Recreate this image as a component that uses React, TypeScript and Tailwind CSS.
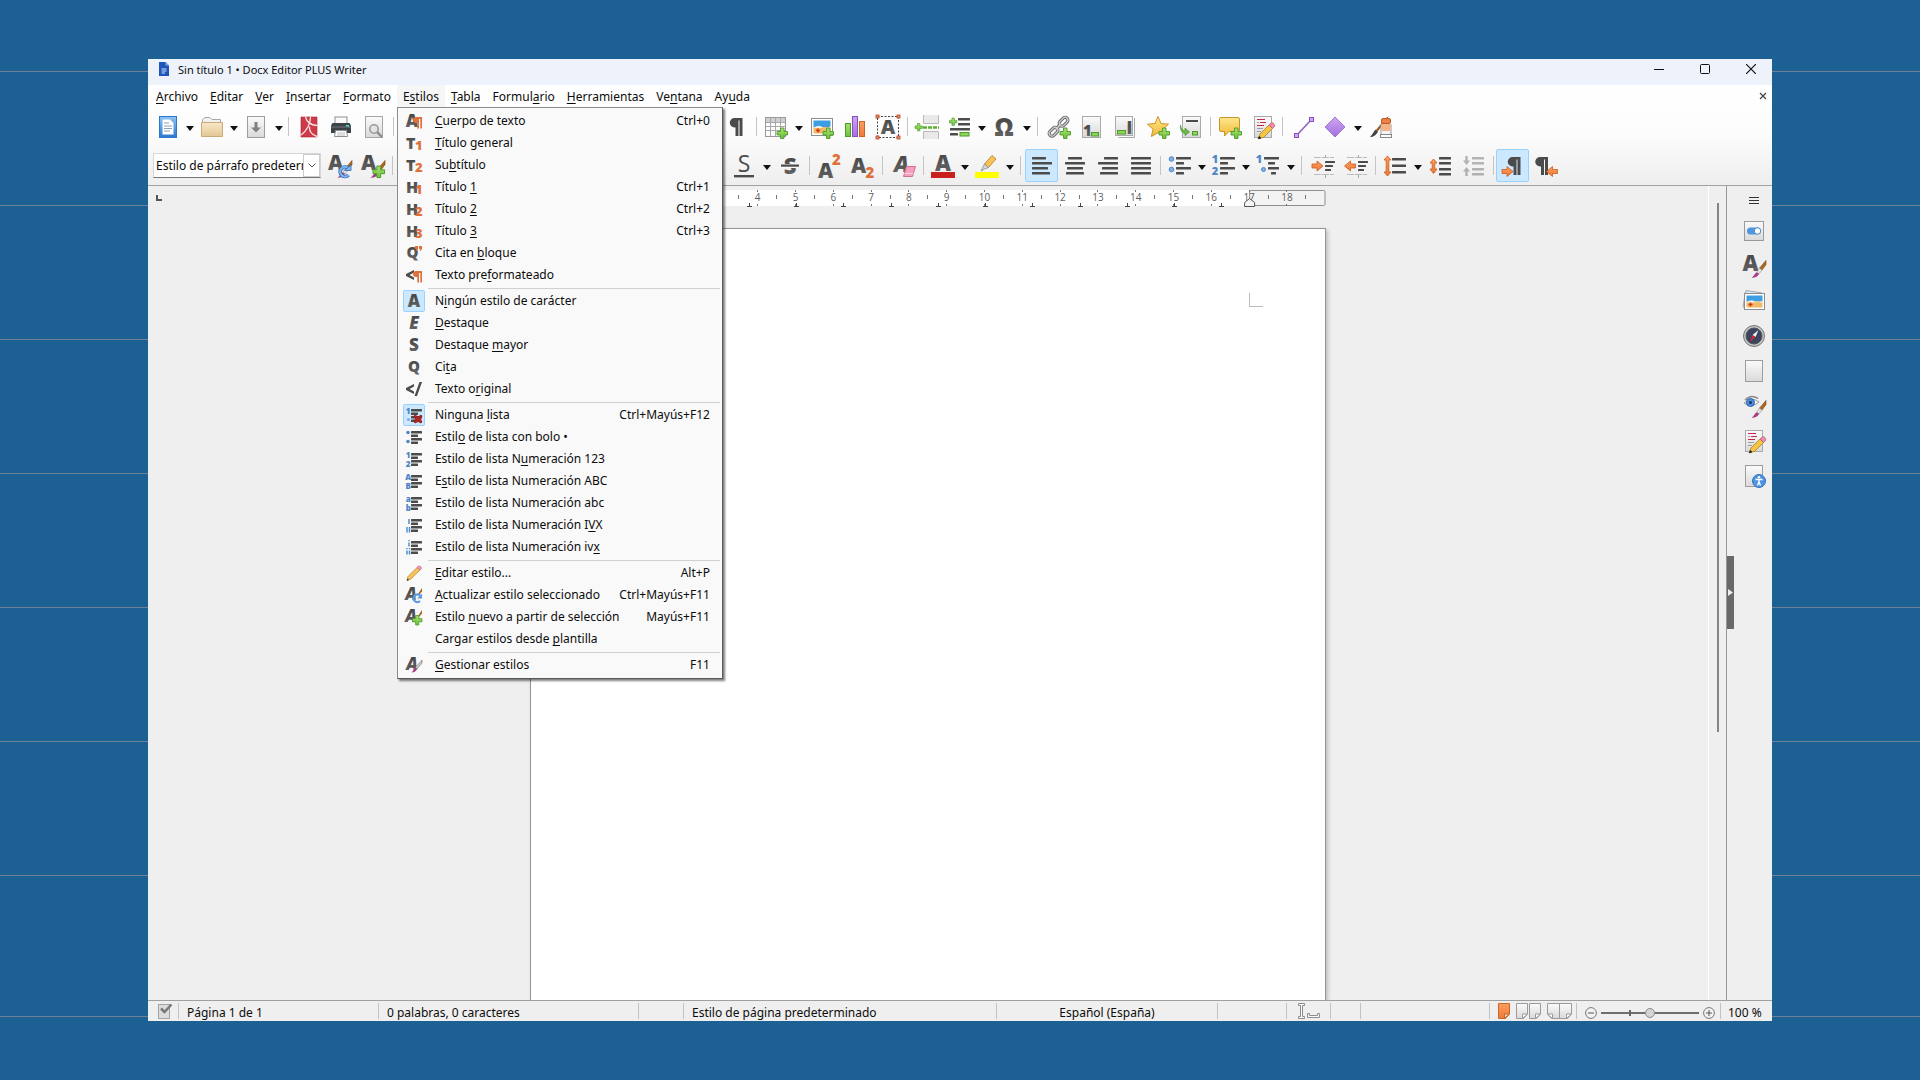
import React from "react";

type IconProps = { children: React.ReactNode };

const DARK = "#4b4b4b";
const ORANGE = "#e0713c";
const BLUE = "#4f86c8";

function Icon24({ children }: IconProps) {
  return (
    <svg viewBox="0 0 24 24" className="size-6 shrink-0 overflow-visible font-['Open_Sans',sans-serif] font-extrabold" aria-hidden="true">
      {children}
    </svg>
  );
}

function Icon16({ children }: IconProps) {
  return (
    <svg viewBox="0 0 16 16" className="size-4 shrink-0 overflow-visible font-['Open_Sans',sans-serif] font-extrabold" aria-hidden="true">
      {children}
    </svg>
  );
}

function Gradients() {
  return (
    <svg width="0" height="0" className="absolute" aria-hidden="true">
      <defs>
        <linearGradient id="g-paper" x1="0" y1="0" x2="0" y2="1">
          <stop offset="0" stopColor="#fbfbfb" />
          <stop offset="1" stopColor="#d9d9d9" />
        </linearGradient>
        <linearGradient id="g-dark" x1="0" y1="0" x2="0" y2="1">
          <stop offset="0" stopColor="#3d3d3d" />
          <stop offset="1" stopColor="#6a6a6a" />
        </linearGradient>
        <linearGradient id="g-blue" x1="0" y1="0" x2="0" y2="1">
          <stop offset="0" stopColor="#8fc4f5" />
          <stop offset="1" stopColor="#2a78d0" />
        </linearGradient>
        <linearGradient id="g-folder" x1="0" y1="0" x2="0" y2="1">
          <stop offset="0" stopColor="#f8e8c8" />
          <stop offset="1" stopColor="#e2c794" />
        </linearGradient>
        <linearGradient id="g-yellow" x1="0" y1="0" x2="0" y2="1">
          <stop offset="0" stopColor="#ffe88a" />
          <stop offset="1" stopColor="#f0b93a" />
        </linearGradient>
        <linearGradient id="g-violet" x1="0" y1="0" x2="0" y2="1">
          <stop offset="0" stopColor="#cfa5f2" />
          <stop offset="1" stopColor="#a36fdc" />
        </linearGradient>
        <linearGradient id="g-green" x1="0" y1="0" x2="0" y2="1">
          <stop offset="0" stopColor="#a5e26b" />
          <stop offset="1" stopColor="#6cc23c" />
        </linearGradient>
        <linearGradient id="g-orange" x1="0" y1="0" x2="0" y2="1">
          <stop offset="0" stopColor="#ff9d63" />
          <stop offset="1" stopColor="#ee7a35" />
        </linearGradient>
      </defs>
    </svg>
  );
}

function Plus({ x, y, u = 1 }: { x: number; y: number; u?: number }) {
  const a = 3.5 * u;
  return (
    <path
      d={`M${x + a} ${y}h${a}v${a}h${a}v${a}h${-a}v${a}h${-a}v${-a}h${-a}v${-a}h${a}z`}
      fill="url(#g-green)"
      stroke="#4f9a2c"
      strokeWidth={0.9 * u}
    />
  );
}

function Brush() {
  return (
    <g>
      <path d="M24 6.500L24 10.500L20 16L17.500 14.200Z" fill="#b0691f" stroke="#6e3d0c" strokeWidth=".6" />
      <path d="M17.500 14.200L20 16L17 20L14.700 18.200Z" fill="#e4e4e4" stroke="#8a8a8a" strokeWidth=".6" />
      <path d="M14.700 18.200L17 20C16 22.500 13 24 9.500 23.800C12 22.500 12.500 19.500 14.700 18.200Z" fill="#a83a86" />
    </g>
  );
}

function Pencil() {
  return (
    <g strokeWidth=".7">
      <path d="M9 19L18 10L21.500 13.500L12.500 22.500L7.500 23.500Z" fill="#f6c544" stroke="#a5700f" />
      <path d="M18 10L20.500 7.800C22 7 24.300 9.500 23.600 11.400L21.500 13.500Z" fill="#f08bab" stroke="#b8506f" />
      <path d="M8.200 21.400L10 23L7.200 23.900Z" fill="#222" stroke="#222" />
    </g>
  );
}

function Letter({ t, x, y, size, fill = "url(#g-dark)", italic = false, anchor = "middle" }: {
  t: string; x: number; y: number; size: number; fill?: string; italic?: boolean; anchor?: "start" | "middle" | "end";
}) {
  return (
    <text x={x} y={y} fontSize={size} fill={fill} textAnchor={anchor} fontStyle={italic ? "italic" : "normal"}>
      {t}
    </text>
  );
}

type Row = [number, number, number];

function Bars({ rows, h = 2.4 }: { rows: Row[]; h?: number }) {
  return (
    <g fill={DARK}>
      {rows.map(([x, y, w]) => (
        <rect key={`${x}-${y}`} x={x} y={y} width={w} height={h} rx=".5" />
      ))}
    </g>
  );
}

function Pilcrow({ x = 0, y = 0 }: { x?: number; y?: number }) {
  return (
    <path
      transform={`translate(${x} ${y})`}
      d="M5 0H13V18H10V2.500H9V18H6V9.500H5A4.750 4.750 0 0 1 5 0Z"
      fill={DARK}
    />
  );
}

function Arrow({ x, y, left = false }: { x: number; y: number; left?: boolean }) {
  return (
    <path
      d="M0 3.500H5V0.500L11 5.500L5 10.500V7.500H0Z"
      transform={left ? `translate(${x + 11} ${y}) scale(-1 1)` : `translate(${x} ${y})`}
      fill="url(#g-orange)"
      stroke="#c65a1c"
      strokeWidth=".8"
    />
  );
}

function Photo({ x, y, w, h }: { x: number; y: number; w: number; h: number }) {
  return (
    <g transform={`translate(${x} ${y})`}>
      <rect width={w} height={h} fill="#fff" stroke="#8d8d8d" />
      <rect x="2" y="2" width={w - 4} height={h / 2 - 2} fill="#3d9fe2" />
      <rect x="2" y={h / 2} width={w - 4} height={h / 2 - 2} fill="#f0b964" />
      <path d={`M2 ${h / 2 + 1}Q${w / 3} ${h / 2 - 3} ${w / 2} ${h / 2}T${w - 2} ${h / 2 - 1}V${h / 2 + 1}Z`} fill="#fff" opacity=".8" />
      <path d={`M${w / 2 - 6} ${h - 5}h4M${w / 2 - 4} ${h - 7}v4`} stroke="#d8321c" strokeWidth="1.500" />
    </g>
  );
}

const icons24: Record<string, React.ReactNode> = {
  nuevo: (
    <>
      <rect x="3.500" y="1.500" width="17" height="21" fill="url(#g-blue)" stroke="#2d78cd" />
      <path d="M6.500 4.500H14L17.500 8V19.500H6.500Z" fill="#fff" />
      <path d="M8 8h5M8 11h8M8 13.500h8M8 16h6" stroke="#8aa0b8" />
    </>
  ),
  abrir: (
    <>
      <path d="M2.500 19V4.500L5 2.500H10L12 4.500H20.500V19Z" fill="#f1f1f1" stroke="#a8a8a8" />
      <path d="M1.500 7.500H22.500V21.500H1.500Z" fill="url(#g-folder)" stroke="#c9ab78" />
    </>
  ),
  guardar: (
    <>
      <rect x="3.500" y="1.500" width="17" height="21" fill="url(#g-paper)" stroke="#9d9d9d" />
      <path d="M10.500 7h3v5.500h3.500L12 17.500L7 12.500h3.500Z" fill="#808080" />
    </>
  ),
  pdf: (
    <>
      <path d="M5 2H21V22H5Z" fill="#cf3a48" stroke="#a82433" strokeWidth=".6" />
      <path d="M9.500 2C10.500 6 12.500 10 21 10.500M14.500 2C14.500 8 11 16 5 20M13.500 11.500C13 15 15 20 21 21.500" fill="none" stroke="#f9e4e6" strokeWidth="1.300" />
    </>
  ),
  imprimir: (
    <>
      <rect x="6" y="2" width="12" height="7" fill="#fafafa" stroke="#8f8f8f" />
      <path d="M3.500 8H20.500L22 10.500V18H2V10.500Z" fill="#3c4448" />
      <path d="M2 12H22" stroke="#6e777c" />
      <rect x="17" y="10" width="3" height="1.500" fill="#4be0d0" />
      <path d="M6.500 15.500H17.500L18.500 21.500H5.500Z" fill="#fff" stroke="#8f8f8f" />
      <path d="M8 18h8M8 20h8" stroke="#bcbcbc" />
    </>
  ),
  vista: (
    <>
      <rect x="3.500" y="1.500" width="17" height="21" fill="url(#g-paper)" stroke="#a5a5a5" />
      <circle cx="12" cy="14" r="4.200" fill="#e3e3e3" stroke="#9a9a9a" strokeWidth="1.600" />
      <path d="M15.200 17.200L20 22" stroke="#8c8c8c" strokeWidth="2.400" />
    </>
  ),
  marcas: <Pilcrow x={4.500} y={3} />,
  tabla: (
    <>
      <rect x="1.500" y="2.500" width="20" height="19" fill="#fdfdfd" stroke="#9a9a9a" />
      <rect x="2" y="3" width="19" height="4" fill="#cfcfcf" />
      <path d="M2 7.500H21M2 11.500H21M2 15.500H21M6.500 3V21M11.500 3V21M16.500 3V21" stroke="#a8a8a8" />
      <Plus x={13} y={13} />
    </>
  ),
  imagen: (
    <>
      <Photo x={1.500} y={3.500} w={21} h={17} />
      <Plus x={13} y={13} />
    </>
  ),
  grafico: (
    <>
      <rect x="2.500" y="8.500" width="5" height="13" fill="url(#g-green)" stroke="#4f9a2c" />
      <rect x="9.500" y="1.500" width="5" height="20" fill="url(#g-violet)" stroke="#8552bd" />
      <rect x="16.500" y="6.500" width="5" height="15" fill="url(#g-orange)" stroke="#cc6425" />
    </>
  ),
  cuadro: (
    <>
      <rect x="1.500" y="1.500" width="21" height="21" fill="none" stroke="#444" strokeDasharray="2 1.500" />
      <Letter t="A" x={12} y={19} size={20} />
      <g fill="#e58c6c" stroke="#b9472a" strokeWidth=".8">
        <rect x="0" y="0" width="3" height="3" />
        <rect x="21" y="0" width="3" height="3" />
        <rect x="0" y="21" width="3" height="3" />
        <rect x="21" y="21" width="3" height="3" />
      </g>
    </>
  ),
  salto: (
    <>
      <path d="M8.500 0V8.500H23.500V0M8.500 24V16.500H23.500V24" fill="#e9e9e9" stroke="#b9b9b9" />
      <path d="M8 12.500H24" stroke="#5fae35" strokeWidth="2.500" strokeDasharray="4 1" />
      <Plus x={0} y={8.500} u={0.7} />
    </>
  ),
  campo: (
    <>
      <Bars rows={[[10, 3, 12], [10, 8, 12], [2, 13, 20], [2, 18, 8]]} />
      <rect x="12" y="17.500" width="9" height="3.500" fill="#8ed65a" stroke="#4f9a2c" />
      <Plus x={1.500} y={3} u={0.7} />
    </>
  ),
  omega: <Letter t="Ω" x={12} y={21} size={24} />,
  enlace: (
    <>
      <g fill="none" stroke="#6c6c6c" strokeWidth="3.200">
        <rect x="11.500" y="4" width="10" height="5.500" rx="2.700" transform="rotate(-45 16.500 6.700)" />
        <rect x="1.500" y="14" width="10" height="5.500" rx="2.700" transform="rotate(-45 6.500 16.700)" />
        <path d="M8.500 14.500L14 9" />
      </g>
      <g fill="none" stroke="#d4d4d4" strokeWidth="1.200">
        <rect x="11.500" y="4" width="10" height="5.500" rx="2.700" transform="rotate(-45 16.500 6.700)" />
        <rect x="1.500" y="14" width="10" height="5.500" rx="2.700" transform="rotate(-45 6.500 16.700)" />
        <path d="M8.500 14.500L14 9" />
      </g>
      <Plus x={13} y={13} />
    </>
  ),
  pie: (
    <>
      <rect x="2.500" y="1.500" width="18" height="21" fill="url(#g-paper)" stroke="#aaa" />
      <Letter t="1" x={7.500} y={21} size={15} />
      <rect x="11.500" y="17.500" width="7" height="3.500" fill="#8ed65a" stroke="#4f9a2c" />
    </>
  ),
  final: (
    <>
      <path d="M5.500 22.500H21.500V3" fill="none" stroke="#aaa" />
      <rect x="2.500" y="1.500" width="17" height="19" fill="url(#g-paper)" stroke="#aaa" />
      <Letter t="i" x={16.500} y={19} size={18} />
      <rect x="4.500" y="15.500" width="8" height="3.500" fill="#8ed65a" stroke="#4f9a2c" />
    </>
  ),
  marcador: (
    <>
      <path d="M12 1.500L15 8.500L22.500 9.200L17 14.200L18.600 21.500L12 17.700L5.400 21.500L7 14.200L1.500 9.200L9 8.500Z" fill="url(#g-yellow)" stroke="#c9952a" />
      <Plus x={13} y={13} />
    </>
  ),
  referencia: (
    <>
      <rect x="3.500" y="1.500" width="18" height="21" fill="url(#g-paper)" stroke="#aaa" />
      <path d="M7 6h12" stroke={DARK} strokeWidth="2" />
      <rect x="13.500" y="16.500" width="5" height="3.500" fill="#8ed65a" stroke="#4f9a2c" />
      <path d="M1.500 10C2 14 4 15.500 6 15.500V13L10.500 17L6 20.500V18.300C2.500 18 1 14.500 1.500 10Z" fill="#6aba4a" stroke="#3f8a25" strokeWidth=".6" />
    </>
  ),
  comentario: (
    <>
      <path d="M3 2.500H20Q21.500 2.500 21.500 4V15Q21.500 16.500 20 16.500H11L6.500 21V16.500H3Q1.500 16.500 1.500 15V4Q1.500 2.500 3 2.500Z" fill="url(#g-yellow)" stroke="#c9952a" />
      <Plus x={13} y={13} />
    </>
  ),
  cambios: (
    <>
      <rect x="3.500" y="1.500" width="17" height="21" fill="url(#g-paper)" stroke="#aaa" />
      <path d="M6 4.500h8M9 7.500h6M6 10.500h7" stroke="#c4284a" strokeWidth="1.200" />
      <path d="M6 7.500h2M6 13.500h6M6 16.500h4" stroke="#9c9c9c" />
      <Pencil />
    </>
  ),
  linea: (
    <>
      <path d="M7 20L21 5" stroke="#8c5fc4" strokeWidth="1.500" />
      <rect x="4.500" y="18.500" width="4" height="4" fill="#cfa5f2" stroke="#8552bd" />
      <rect x="19.500" y="2.500" width="4" height="4" fill="#cfa5f2" stroke="#8552bd" />
    </>
  ),
  rombo: <path d="M12 2L22 12L12 22L2 12Z" fill="url(#g-violet)" stroke="#9262cc" strokeWidth=".8" />,
  formas: (
    <>
      <path d="M19.500 1L17 7L8 17L6.500 15.500L16 4Z" fill="#9a5b2a" />
      <path d="M6.500 14.500L9 17L6.500 20C4.500 21.800 2.500 22 1 22C3 20.500 4 17.500 6.500 14.500Z" fill="#444" />
      <rect x="12.500" y="3.500" width="9" height="5" rx="1.500" fill="#ee7f45" stroke="#b85a24" />
      <path d="M12 9.500H22V20H12Z" fill="#f4f4f4" stroke="#999" />
      <rect x="12.500" y="9" width="9" height="7" fill="#f6b184" />
      <rect x="11.500" y="19.500" width="11" height="3" fill="#fff" stroke="#888" />
    </>
  ),
  actualizar: (
    <>
      <Letter t="A" x={7.500} y={16} size={21} />
      <Brush />
      <path d="M20.500 21A4.800 4.800 0 1 1 20 14" fill="none" stroke="#2f6bb5" strokeWidth="3.600" />
      <path d="M20.500 21A4.800 4.800 0 1 1 20 14" fill="none" stroke="#7db4ee" strokeWidth="2.200" />
      <path d="M16.500 16.500H23V11Z" fill="#7db4ee" stroke="#2f6bb5" strokeWidth=".8" />
    </>
  ),
  nuevoEstilo: (
    <>
      <Letter t="A" x={7.500} y={16} size={21} />
      <Brush />
      <Plus x={12} y={12} u={1.100} />
    </>
  ),
  subrayado: (
    <>
      <text x="12" y="18" fontSize="23" fill={DARK} textAnchor="middle" fontWeight="500">S</text>
      <rect x="2" y="21" width="20" height="2.400" fill={DARK} />
    </>
  ),
  tachado: (
    <>
      <Letter t="S" x={12} y={20} size={22} />
      <rect x="3" y="10" width="18" height="4" fill="#f8f8f8" />
      <rect x="3" y="10.500" width="18" height="2.200" fill={DARK} />
    </>
  ),
  superindice: (
    <>
      <Letter t="A" x={8.500} y={23.500} size={21} />
      <Letter t="2" x={19.500} y={11} size={15} fill={ORANGE} />
    </>
  ),
  subindice: (
    <>
      <Letter t="A" x={8.500} y={19} size={21} />
      <Letter t="2" x={20} y={23.500} size={15} fill={ORANGE} />
    </>
  ),
  limpiar: (
    <>
      <Letter t="A" x={9.500} y={18} size={22} italic />
      <path d="M14.500 12.500H23.500L20.500 22.500H11.500Z" fill="#f79fbe" stroke="#d0718f" />
      <path d="M12.500 19.500H21.500" stroke="#fbd0dd" />
    </>
  ),
  colorTexto: (
    <>
      <Letter t="A" x={12} y={16.500} size={22} />
      <rect x="0" y="18" width="24" height="6" fill="#c9211e" />
    </>
  ),
  resaltado: (
    <>
      <rect x="0" y="18" width="24" height="6" fill="#ffff00" />
      <path d="M9.500 10L17 1.500L21 5L13.500 13.500Z" fill="#f8c254" stroke="#b37d1e" strokeWidth=".8" />
      <path d="M9.500 10L13.500 13.500L9.500 15L6 17Z" fill="#d8d8d8" stroke="#888" strokeWidth=".8" />
    </>
  ),
  izquierda: <Bars rows={[[2, 3, 14], [2, 8, 20], [2, 13, 16], [2, 18, 18]]} />,
  centro: <Bars rows={[[5, 3, 14], [2, 8, 20], [4, 13, 16], [3, 18, 18]]} />,
  derecha: <Bars rows={[[8, 3, 14], [2, 8, 20], [6, 13, 16], [4, 18, 18]]} />,
  justificado: <Bars rows={[[2, 3, 20], [2, 8, 20], [2, 13, 20], [2, 18, 20]]} />,
  vinetas: (
    <>
      <Bars rows={[[8, 3, 15], [8, 8, 8], [8, 13, 15], [8, 18, 8]]} />
      <circle cx="3.500" cy="5" r="2.300" fill="#7fb0e8" stroke={BLUE} />
      <circle cx="3.500" cy="15.500" r="2.300" fill="#7fb0e8" stroke={BLUE} />
    </>
  ),
  numeros: (
    <>
      <Bars rows={[[8, 3, 15], [8, 8, 8], [8, 13, 15], [8, 18, 8]]} />
      <Letter t="1" x={3} y={9} size={11} fill={BLUE} />
      <Letter t="2" x={3} y={21} size={11} fill={BLUE} />
    </>
  ),
  esquema: (
    <>
      <Bars rows={[[8, 3, 15], [12, 8, 7], [12, 13, 11], [15, 18, 5]]} />
      <Letter t="1" x={3} y={9} size={11} fill={BLUE} />
      <circle cx="7.500" cy="15.500" r="2" fill="#7fb0e8" stroke={BLUE} />
    </>
  ),
  sangriaMas: (
    <>
      <path d="M3 3.500h20M3 20.500h20" stroke="#bbb" strokeDasharray="7 1" />
      <path d="M14.500 1v3M14.500 21v3" stroke="#aaa" />
      <Bars rows={[[14, 7, 10], [14, 11, 8], [14, 15, 6]]} h={2} />
      <Arrow x={1} y={6.500} />
    </>
  ),
  sangriaMenos: (
    <>
      <path d="M3 3.500h20M3 20.500h20" stroke="#bbb" strokeDasharray="7 1" />
      <path d="M14.500 1v3M14.500 21v3" stroke="#aaa" />
      <Bars rows={[[14, 7, 10], [14, 11, 8], [14, 15, 6]]} h={2} />
      <Arrow x={0.500} y={6.500} left />
    </>
  ),
  interlineado: (
    <>
      <Bars rows={[[9, 4, 14], [9, 10.500, 14], [9, 17, 14]]} />
      <path d="M4.500 2L8 6H5.800V18H8L4.500 22L1 18H3.200V6H1Z" fill="url(#g-orange)" stroke="#c65a1c" strokeWidth=".8" />
    </>
  ),
  espacioMas: (
    <>
      <Bars rows={[[10, 3, 12], [10, 8, 12], [10, 14, 12], [10, 19, 12]]} />
      <path d="M4.500 5L8 9H5.800V15H8L4.500 19.500L1 15H3.200V9H1Z" fill="url(#g-orange)" stroke="#c65a1c" strokeWidth=".8" />
    </>
  ),
  espacioMenos: (
    <g opacity=".38">
      <Bars rows={[[10, 3, 12], [10, 8, 12], [10, 14, 12], [10, 19, 12]]} />
      <path d="M3.300 2H5.700V6.500H8L4.500 11L1 6.500H3.300ZM3.300 22H5.700V17.500H8L4.500 13L1 17.500H3.300Z" fill={DARK} />
    </g>
  ),
  ltr: (
    <>
      <Pilcrow x={6.500} y={3} />
      <Arrow x={1} y={12} />
    </>
  ),
  rtl: (
    <>
      <Pilcrow x={1} y={3} />
      <Arrow x={12.500} y={12} left />
    </>
  ),
  propiedades: (
    <>
      <rect x="2.500" y="2.500" width="19" height="19" fill="url(#g-paper)" stroke="#9a9a9a" />
      <rect x="5" y="8.500" width="14" height="7" rx="3.500" fill="#4f94e0" />
      <circle cx="15.500" cy="12" r="3.200" fill="#fff" stroke="#3a76b8" strokeWidth=".8" />
    </>
  ),
  estilos: (
    <>
      <Letter t="A" x={8.500} y={17} size={22} />
      <Brush />
    </>
  ),
  galeria: (
    <>
      <path d="M4 1.500L20 4V8H3Z" fill="#d4ecfa" stroke="#a8a8a8" />
      <path d="M3.500 3L1 18L4 19" fill="#eee" stroke="#a8a8a8" />
      <Photo x={2.500} y={4.500} w={20} h={16} />
    </>
  ),
  navegador: (
    <>
      <circle cx="12" cy="12" r="10.500" fill="#c4c4c4" stroke="#777" />
      <circle cx="12" cy="12" r="8" fill="#3b4560" stroke="#555" />
      <path d="M16.500 6L13.500 13L10.500 11Z" fill="#f2f2f2" />
      <path d="M8 18L10.500 11L13.500 13Z" fill="#d5293b" />
    </>
  ),
  pagina: <rect x="3.500" y="1.500" width="17" height="21" fill="url(#g-paper)" stroke="#9d9d9d" />,
  inspector: (
    <>
      <path d="M2 9Q9 2 17 8Q9 15 2 9Z" fill="#fdfdfd" stroke="#9a9a9a" />
      <path d="M3 6Q9 0 16 4.500" fill="none" stroke="#8a8a8a" strokeWidth="1.500" />
      <circle cx="8.500" cy="8.500" r="4" fill="#4b8fe0" stroke="#2d62a8" />
      <circle cx="8.500" cy="8.500" r="1.500" fill="#1d3358" />
      <Brush />
    </>
  ),
  accesibilidad: (
    <>
      <rect x="3.500" y="1.500" width="17" height="21" fill="url(#g-paper)" stroke="#9d9d9d" />
      <circle cx="17" cy="17" r="6.500" fill="#4f94e0" stroke="#3272c0" />
      <circle cx="17" cy="13.300" r="1.200" fill="#fff" />
      <path d="M13.500 15.500H20.500M17 15.500V18M15.500 21.500L17 17.500L18.500 21.500" stroke="#fff" strokeWidth="1.300" fill="none" />
    </>
  ),
};

const RedPilcrow = () => (
  <path d="M10 4H16V15.500H14.300V6H13V15.500H11.300V10H10A3 3 0 0 1 10 4Z" fill={ORANGE} />
);

const ListLines = () => (
  <Bars rows={[[5, 2, 11], [5, 5.500, 7], [5, 9, 11], [5, 12.500, 7]]} h={2.500} />
);

const listIcon = (a: string, b: string) => (
  <>
    <ListLines />
    <Letter t={a} x={2.200} y={7} size={8} fill={BLUE} />
    <Letter t={b} x={2.200} y={15.500} size={8} fill={BLUE} />
  </>
);

const letterPair = (a: string, b: string) => (
  <>
    <Letter t={a} x={0} y={13.500} size={16} anchor="start" />
    <Letter t={b} x={16.500} y={15} size={13} fill={ORANGE} anchor="end" />
  </>
);

const icons16: Record<string, React.ReactNode> = {
  cuerpo: (
    <>
      <Letter t="A" x={6} y={14} size={17} />
      <RedPilcrow />
    </>
  ),
  t1: letterPair("T", "1"),
  t2: letterPair("T", "2"),
  h1: letterPair("H", "1"),
  h2: letterPair("H", "2"),
  h3: letterPair("H", "3"),
  cita: (
    <>
      <Letter t="Q" x={6.500} y={13} size={15} />
      <path d="M9 1H12V4L10.500 6H9.500L10.500 4H9ZM13 1H16V4L14.500 6H13.500L14.500 4H13Z" fill={ORANGE} />
    </>
  ),
  pre: (
    <>
      <path d="M8 3V5.500L3.500 8L8 10.500V13L0 9V7Z" fill={DARK} />
      <RedPilcrow />
    </>
  ),
  A: <Letter t="A" x={8} y={14} size={17} />,
  E: <Letter t="E" x={8} y={14} size={17} italic />,
  S: <Letter t="S" x={8} y={14} size={17} />,
  Q: <Letter t="Q" x={8} y={13} size={15} />,
  codigo: <path d="M8 3V5.500L3.500 8L8 10.500V13L0 9V7ZM13.500 1H16L11 15H8.500Z" fill={DARK} />,
  sinLista: (
    <>
      <ListLines />
      <Letter t="1" x={2.200} y={7} size={8} fill={BLUE} />
      <circle cx="2.500" cy="12.500" r="1.600" fill="#7fb0e8" />
      <path d="M8 9L9 8L12 10L15 8L16 9L14.500 12L16 15L15 16L12 14.500L9 16L8 15L9.500 12Z" fill="#b32424" stroke="#8c1c1c" strokeWidth=".8" />
    </>
  ),
  bolo: (
    <>
      <ListLines />
      <circle cx="2" cy="3.500" r="1.800" fill={BLUE} />
      <circle cx="2" cy="12.500" r="1.800" fill={BLUE} />
    </>
  ),
  l12: listIcon("1", "2"),
  lAB: listIcon("A", "B"),
  lab: listIcon("a", "b"),
  lIV: (
    <>
      <ListLines />
      <path d="M3 2V7M1 10V15.500M3.500 10V15.500" stroke="#4a90d0" strokeWidth="1.500" />
    </>
  ),
  liv: (
    <>
      <ListLines />
      <path d="M3 3.500V7.500M1 11.500V15.500M3.500 11.500V15.500M3 1V2.200M1 9V10.200M3.500 9V10.200" stroke="#4a90d0" strokeWidth="1.500" />
    </>
  ),
  editar: (
    <>
      <path d="M1 15.500L2 11.500L11 2.500L14 5L5 14Z" fill="#f3c25c" stroke="#b98a2c" strokeWidth=".7" />
      <path d="M11 2.500L12.500 1C14 .5 15.700 2 15.500 3.500L14 5Z" fill="#f19ab2" stroke="#c66b86" strokeWidth=".7" />
      <path d="M.8 15.800L1.400 13.500L3.200 15Z" fill="#333" />
    </>
  ),
  upd: (
    <>
      <Letter t="A" x={5} y={13} size={17} italic />
      <path d="M16 1V4.500L13 8L12 7Z" fill="#a8641f" />
      <path d="M14 14A3.800 3.800 0 1 1 14 8.500" fill="none" stroke="#5c9ae0" strokeWidth="2.200" />
      <path d="M11 11.500H16V6.500Z" fill="#5c9ae0" />
    </>
  ),
  add: (
    <>
      <Letter t="A" x={5} y={13} size={17} italic />
      <path d="M16 1V4.500L13 8L12 7Z" fill="#a8641f" />
      <Plus x={6.500} y={6.500} u={0.900} />
    </>
  ),
  gest: (
    <>
      <Letter t="A" x={6} y={13} size={17} italic />
      <path d="M16 3V6L11 12L9.500 10.500Z" fill="#cfcfcf" stroke="#7a6a5a" strokeWidth=".6" />
      <path d="M9.500 10.500L11 12C10 14.500 8 15.500 5.500 15.500C7 14.500 7.500 12 9.500 10.500Z" fill="#a83a86" />
    </>
  ),
};

/* "&" marks the mnemonic letter, which is underlined. */
function Mnemonic({ label }: { label: string }) {
  const at = label.indexOf("&");
  if (at < 0) return <>{label}</>;
  return (
    <span>
      {label.slice(0, at)}
      <u className="underline-offset-2 [text-decoration-skip-ink:none]">{label[at + 1]}</u>
      {label.slice(at + 2)}
    </span>
  );
}

type Entry = { icon?: string; label: string; keys?: string; on?: boolean };

const menuGroups: Entry[][] = [
  [
    { icon: "cuerpo", label: "&Cuerpo de texto", keys: "Ctrl+0" },
    { icon: "t1", label: "&Título general" },
    { icon: "t2", label: "Su&btítulo" },
    { icon: "h1", label: "Título &1", keys: "Ctrl+1" },
    { icon: "h2", label: "Título &2", keys: "Ctrl+2" },
    { icon: "h3", label: "Título &3", keys: "Ctrl+3" },
    { icon: "cita", label: "Cita en &bloque" },
    { icon: "pre", label: "Texto pre&formateado" },
  ],
  [
    { icon: "A", label: "N&ingún estilo de carácter", on: true },
    { icon: "E", label: "&Destaque" },
    { icon: "S", label: "Destaque &mayor" },
    { icon: "Q", label: "Ci&ta" },
    { icon: "codigo", label: "Texto o&riginal" },
  ],
  [
    { icon: "sinLista", label: "Ninguna &lista", keys: "Ctrl+Mayús+F12", on: true },
    { icon: "bolo", label: "Estil&o de lista con bolo •" },
    { icon: "l12", label: "Estilo de lista N&umeración 123" },
    { icon: "lAB", label: "E&stilo de lista Numeración ABC" },
    { icon: "lab", label: "Estilo de lista Numeración abc" },
    { icon: "lIV", label: "Estilo de lista Numeración I&VX" },
    { icon: "liv", label: "Estilo de lista Numeración iv&x" },
  ],
  [
    { icon: "editar", label: "&Editar estilo...", keys: "Alt+P" },
    { icon: "upd", label: "&Actualizar estilo seleccionado", keys: "Ctrl+Mayús+F11" },
    { icon: "add", label: "Estilo &nuevo a partir de selección", keys: "Mayús+F11" },
    { label: "Cargar estilos desde &plantilla" },
  ],
  [{ icon: "gest", label: "&Gestionar estilos", keys: "F11" }],
];

function StylesMenu() {
  return (
    <div
      role="menu"
      aria-label="Estilos"
      className="absolute left-0 top-full z-20 w-[326px] border border-[#8c8c8c] border-r-[#5a5a5a] border-b-[#5a5a5a] bg-[#f9f9f9] pt-0.5 pb-0.5 shadow-[2px_2px_2px_rgba(0,0,0,0.5)]"
    >
      {menuGroups.map((group, g) => (
        <div key={g}>
          {g > 0 && <div role="separator" className="my-px mr-0.5 ml-[30px] h-0.5 border-b border-[#cdd1d1]" />}
          {group.map((e) => (
            <button key={e.label} role="menuitem" type="button" className="flex h-[22px] w-full items-center pr-3 pl-[5px] text-left">
              <span
                className={
                  e.on
                    ? "mr-2.5 flex size-[22px] items-center justify-center rounded-xs border border-[#99d1ff] bg-[#cce8ff]"
                    : "mr-2.5 flex size-[22px] items-center justify-center"
                }
              >
                {e.icon && <Icon16>{icons16[e.icon]}</Icon16>}
              </span>
              <span className="flex-1 whitespace-nowrap">
                <Mnemonic label={e.label} />
              </span>
              <span>{e.keys}</span>
            </button>
          ))}
        </div>
      ))}
    </div>
  );
}

const menuBar = ["&Archivo", "&Editar", "&Ver", "&Insertar", "&Formato", "E&stilos", "&Tabla", "Formul&ario", "&Herramientas", "Ve&ntana", "Ay&uda"];

function MenuBar() {
  return (
    <nav className="flex h-[22px] items-stretch pl-0.5">
      {menuBar.map((label) =>
        label === "E&stilos" ? (
          <div key={label} className="relative">
            <button type="button" aria-expanded="true" className="h-full bg-[#f6f6f6] px-1.5 pt-0.5">
              <Mnemonic label={label} />
            </button>
            <StylesMenu />
          </div>
        ) : (
          <button key={label} type="button" className="px-1.5 pt-0.5">
            <Mnemonic label={label} />
          </button>
        ),
      )}
      <button type="button" aria-label="Cerrar documento" className="mr-[5px] ml-auto self-center">
        <svg viewBox="0 0 8 8" className="size-2" aria-hidden="true">
          <path d="M1 1L7 7M7 1L1 7" stroke="#444" strokeWidth="1.200" />
        </svg>
      </button>
    </nav>
  );
}

/* Toolbar tokens: an icon name, "v"/"V" for a narrow/wide drop-down arrow, "|"/"||" for a narrow/wide divider. */
function ToolItems({ items, active = [] }: { items: string[]; active?: string[] }) {
  return (
    <>
      {items.map((it, i) => {
        if (it === "|" || it === "||")
          return (
            <div key={i} className={it === "|" ? "flex w-1.5 items-center justify-center" : "flex w-[9px] items-center justify-center"}>
              <div className="h-[19px] w-px bg-[#c4c4c4]" />
            </div>
          );
        if (it === "v" || it === "V")
          return (
            <button
              key={i}
              type="button"
              aria-label="Más opciones"
              className={it === "v" ? "flex w-[11px] items-center justify-center pt-1" : "flex w-[13px] items-center justify-center pt-1"}
            >
              <svg viewBox="0 0 8 5" className="h-[5px] w-2 shrink-0" aria-hidden="true">
                <path d="M0 0H8L4 5Z" fill="#111" />
              </svg>
            </button>
          );
        return (
          <button
            key={i}
            type="button"
            aria-label={it}
            className={
              active.includes(it)
                ? "flex size-[33px] items-center justify-center rounded-xs border border-[#99d1ff] bg-[#cce8ff]"
                : "flex size-[33px] items-center justify-center"
            }
          >
            <Icon24>{icons24[it]}</Icon24>
          </button>
        );
      })}
    </>
  );
}

function Toolbars() {
  return (
    <>
      <div className="mt-[3px] flex h-[33px] pl-[3px]">
        <ToolItems items={["nuevo", "v", "abrir", "v", "guardar", "V", "|", "pdf", "imprimir", "vista", "|"]} />
        <div className="w-[324px]" />
        <ToolItems
          items={[
            "marcas", "|", "tabla", "V", "imagen", "grafico", "cuadro", "|", "salto", "campo", "v", "omega", "V", "||",
            "enlace", "pie", "final", "marcador", "referencia", "|", "comentario", "cambios", "|", "linea", "rombo", "V", "formas",
          ]}
        />
      </div>
      <div className="mt-1.5 flex h-[33px] items-center pl-[5px]">
        <label className="mr-0.5 flex h-[25px] w-[168px] border border-[#d6d6d6] border-b-[#777] bg-white">
          <input
            type="text"
            aria-label="Estilo de párrafo"
            defaultValue="Estilo de párrafo predeterminado"
            className="w-0 flex-1 bg-transparent pl-0.5 outline-none"
          />
          <span className="flex w-[17px] items-center justify-center border border-[#ccc]">
            <svg viewBox="0 0 8 5" className="h-[5px] w-2" aria-hidden="true">
              <path d="M.5 .5L4 4L7.500 .5" fill="none" stroke="#555" />
            </svg>
          </span>
        </label>
        <ToolItems items={["actualizar", "nuevoEstilo", "|"]} />
        <div className="w-[332px]" />
        <ToolItems
          active={["izquierda", "ltr"]}
          items={[
            "subrayado", "V", "tachado", "|", "superindice", "subindice", "||", "limpiar", "|", "colorTexto", "v", "resaltado", "V", "||",
            "izquierda", "centro", "derecha", "justificado", "|", "vinetas", "v", "numeros", "v", "esquema", "V", "||",
            "sangriaMas", "sangriaMenos", "|", "interlineado", "V", "espacioMas", "espacioMenos", "|", "ltr", "rtl",
          ]}
        />
      </div>
    </>
  );
}

function TitleBar() {
  return (
    <header className="flex h-[26px] items-center bg-[#edf2fb] pl-2.5">
      <svg viewBox="0 0 12 14" className="mb-[9px] h-3.5 w-3 self-end" aria-hidden="true">
        <path d="M1 0H7.500L11 3.500V14H1Z" fill="#1d56b8" />
        <path d="M7.500 0L11 3.500H7.500Z" fill="#7fa8ea" />
        <path d="M3.500 7h5M3.500 9h5M3.500 11h3.500" stroke="#d6e4fb" />
      </svg>
      <h1 className="ml-2 pb-1 text-[11px]">Sin título 1 • Docx Editor PLUS Writer</h1>
      <div className="mr-4 ml-auto flex gap-9 pb-1.5">
        <button type="button" aria-label="Minimizar">
          <svg viewBox="0 0 10 10" className="size-2.5" aria-hidden="true"><path d="M0 5.500H10" stroke="#111" /></svg>
        </button>
        <button type="button" aria-label="Maximizar">
          <svg viewBox="0 0 10 10" className="size-2.5" aria-hidden="true"><rect x=".5" y=".5" width="9" height="9" rx="1" fill="none" stroke="#111" /></svg>
        </button>
        <button type="button" aria-label="Cerrar">
          <svg viewBox="0 0 10 10" className="size-2.5" aria-hidden="true"><path d="M0 0L10 10M10 0L0 10" stroke="#111" strokeWidth="1.200" /></svg>
        </button>
      </div>
    </header>
  );
}

function Ruler() {
  const cm = 37.8;
  const zero = 77;
  const nums = Array.from({ length: 19 }, (_, i) => i);
  const end = zero + 17 * cm;
  return (
    <svg viewBox="0 0 796 18" className="h-[18px] w-[796px]" aria-hidden="true">
      <rect x={zero} y="0" width={end - zero} height="16" fill="#fff" />
      <rect x={end} y="0.500" width={795 - end} height="15" rx="1.500" fill="#f3f3f3" stroke="#8f8f8f" />
      {nums.map((n) => (
        <g key={n}>
          {n > 0 && (
            <text x={zero + n * cm - 0.5} y="11" fontSize="10" textAnchor="middle" fill="#5e5e5e" className="font-['Open_Sans',sans-serif]">
              {n}
            </text>
          )}
          <path d={`M${Math.round(zero + (n + 0.5) * cm) - 0.5} 5V9M${Math.round(zero + n * cm) - 0.5} 0V2M${Math.round(zero + n * cm) - 0.5} 14V16`} stroke="#777" />
        </g>
      ))}
      {Array.from({ length: 13 }, (_, i) => Math.round(zero + (i + 1) * 47.25)).map((x) => (
        <path key={x} d={`M${x - 2} 16.500H${x + 3}M${x + 0.5} 13V16`} stroke="#444" />
      ))}
      <path d={`M${end - 5} 16.500V12.500L${end} 8.500L${end + 5} 12.500V16.500Z`} fill="#f5f5f5" stroke="#555" />
    </svg>
  );
}

function DocumentView() {
  return (
    <main className="flex min-w-0 flex-1 flex-col items-center overflow-hidden">
      <div className="relative mt-1 flex w-full justify-center">
        <svg viewBox="0 0 6 6" className="absolute left-2 top-[5px] size-1.5" aria-hidden="true">
          <path d="M1 0V5H6" fill="none" stroke="#555" strokeWidth="2" />
        </svg>
        <Ruler />
      </div>
      <div className="mt-5 flex w-[796px] flex-1 items-start justify-end border border-b-0 border-[#959595] bg-white pt-16 pr-[62px] shadow-[2px_2px_4px_rgba(0,0,0,0.2)]">
        <div className="size-3.5 border-b border-l border-[#bdbdbd]" />
      </div>
    </main>
  );
}

const deck = ["propiedades", "estilos", "galeria", "navegador", "pagina", "inspector", "cambios", "accesibilidad"];

function Sidebar() {
  return (
    <>
      <div className="flex w-[18px] justify-center border-l border-white pt-[17px]">
        <div className="h-[529px] w-0.5 bg-[#848484]" />
      </div>
      <aside className="flex w-[46px] border-l border-[#979797]">
        <button type="button" aria-label="Mostrar barra lateral" className="mt-[370px] flex h-[73px] w-[7px] items-center justify-center bg-[#696969]">
          <svg viewBox="0 0 5 7" className="h-[7px] w-[5px]" aria-hidden="true"><path d="M0 0L5 3.500L0 7Z" fill="#eee" /></svg>
        </button>
        <div className="flex flex-1 flex-col items-center pt-[11px] pl-0.5">
          <button type="button" aria-label="Configuración" className="flex h-[7px] w-2.5 flex-col justify-between">
            <span className="h-px w-full bg-[#333]" />
            <span className="h-px w-full bg-[#333]" />
            <span className="h-px w-full bg-[#333]" />
          </button>
          <div className="mt-[9px] flex flex-col">
            {deck.map((name) => (
              <button key={name} type="button" aria-label={name} className="flex h-[35px] w-[33px] items-center justify-center">
                <Icon24>{icons24[name]}</Icon24>
              </button>
            ))}
          </div>
        </div>
      </aside>
    </>
  );
}

function StatusBar() {
  const cell = "flex items-center border-r border-[#c2c2c2] h-4";
  return (
    <footer className="flex h-[21px] items-center border-t border-[#a0a0a0] bg-[#efefef] whitespace-nowrap">
      <div className={`${cell} w-[31px] pl-2.5`}>
        <svg viewBox="0 0 15 16" className="h-4 w-[15px]" aria-hidden="true">
          <rect x=".5" y="1.500" width="11" height="14" fill="#dcdcdc" stroke="#a2a2a2" />
          <path d="M3 5.500L6.500 9L13.500 1.500" fill="none" stroke="#777" strokeWidth="2.500" />
        </svg>
      </div>
      <div className={`${cell} w-[200px] pt-1 pl-2`}>Página 1 de 1</div>
      <div className={`${cell} w-[260px] pt-1 pl-2`}>0 palabras, 0 caracteres</div>
      <div className={`${cell} w-[45px]`} />
      <div className={`${cell} w-[313px] pt-1 pl-2`}>Estilo de página predeterminado</div>
      <div className={`${cell} w-[221px] justify-center pt-1`}>Español (España)</div>
      <div className={`${cell} w-[69px]`} />
      <div className={`${cell} w-[44px] justify-center`}>
        <svg viewBox="0 0 22 16" className="h-4 w-[22px]" aria-hidden="true">
          <path d="M.5 .5H6.500V2.500H4.500V13.500H6.500V15.500H.5V13.500H2.500V2.500H.5ZM9.500 10.500H11.500V12.500H19.500V10.500H21.500V14.500H9.500Z" fill="#fafafa" stroke="#8d8d8d" />
        </svg>
      </div>
      <div className={`${cell} w-[30px]`} />
      <div className={`${cell} flex-1`} />
      <div className={`${cell} w-[87px] gap-1.5 pl-2`}>
        <button type="button" aria-label="Una página">
          <svg viewBox="0 0 12 16" className="h-4 w-3" aria-hidden="true">
            <path d="M.5 .5H11.500V11L7.500 15.500H.5Z" fill="url(#g-orange)" stroke="#c4682c" />
            <path d="M6.500 15.500V11H11.500Z" fill="#fbd0b2" stroke="#c4682c" />
          </svg>
        </button>
        <button type="button" aria-label="Varias páginas">
          <svg viewBox="0 0 25 16" className="h-4 w-[25px]" aria-hidden="true">
            <path d="M.5 .5H11.500V11L7.500 15.500H.5ZM13.500 .5H24.500V11L20.500 15.500H13.500Z" fill="url(#g-paper)" stroke="#9a9a9a" />
            <path d="M6.500 15.500V11H11.500ZM19.500 15.500V11H24.500Z" fill="#fff" stroke="#9a9a9a" />
          </svg>
        </button>
        <button type="button" aria-label="Libro">
          <svg viewBox="0 0 25 16" className="h-4 w-[25px]" aria-hidden="true">
            <path d="M.5 .5H12.500V15.500H4.500L.5 11ZM12.500 .5H24.500V11L20.500 15.500H12.500Z" fill="url(#g-paper)" stroke="#9a9a9a" />
            <path d="M.5 11H5.500V15.500ZM19.500 15.500V11H24.500Z" fill="#fff" stroke="#9a9a9a" />
          </svg>
        </button>
      </div>
      <div className={`${cell} w-[144px] justify-between pt-1 pr-[5px] pl-2`}>
        <button type="button" aria-label="Reducir">
          <svg viewBox="0 0 12 12" className="size-3" aria-hidden="true">
            <circle cx="6" cy="6" r="5.400" fill="#f2f2f2" stroke="#777" />
            <path d="M3 6h6" stroke="#555" />
          </svg>
        </button>
        <div className="relative flex items-center">
          <span className="absolute left-7 h-1.5 w-0.5 bg-[#666]" />
          <input
            type="range"
            aria-label="Escala"
            defaultValue={50}
            className="h-0.5 w-[98px] appearance-none bg-[#6e6e6e] [&::-webkit-slider-thumb]:size-2.5 [&::-webkit-slider-thumb]:appearance-none [&::-webkit-slider-thumb]:rounded-full [&::-webkit-slider-thumb]:border [&::-webkit-slider-thumb]:border-[#8a8a8a] [&::-webkit-slider-thumb]:bg-[#d4d4d4]"
          />
        </div>
        <button type="button" aria-label="Ampliar">
          <svg viewBox="0 0 12 12" className="size-3" aria-hidden="true">
            <circle cx="6" cy="6" r="5.400" fill="#f2f2f2" stroke="#777" />
            <path d="M3 6h6M6 3v6" stroke="#555" />
          </svg>
        </button>
      </div>
      <div className="flex h-4 w-[51px] items-center pt-1 pl-[7px]">100 %</div>
    </footer>
  );
}

const wallLines =
  "bg-[linear-gradient(#6d8296,#6d8296),repeating-linear-gradient(to_bottom,#6d8296_0px,#6d8296_1px,transparent_1px,transparent_134px)] bg-[length:100%_1px,100%_806px] bg-[position:0_1016px,0_71px] bg-no-repeat";

export default function App() {
  return (
    <div className="h-screen bg-[#1c6094] font-['Noto_Sans',sans-serif] text-xs text-[#0c0c0c]">
      <Gradients />
      <div className={`${wallLines} h-full px-[148px] py-[59px]`}>
        <div className="flex h-full flex-col bg-[#efefef]">
          <TitleBar />
          <div className="border-b border-[#a3a3a3] bg-linear-to-b from-white via-[#fcfcfc] to-[#eeeeee] pb-[3px]">
            <MenuBar />
            <Toolbars />
          </div>
          <div className="flex min-h-0 flex-1">
            <DocumentView />
            <Sidebar />
          </div>
          <StatusBar />
        </div>
      </div>
    </div>
  );
}
